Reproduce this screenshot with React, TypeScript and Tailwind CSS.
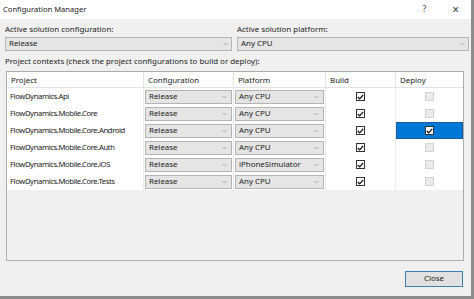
import React from "react"

const projects = [
  { name: "FlowDynamics.Api", config: "Release", platform: "Any CPU", build: true, deploy: false, selected: false },
  { name: "FlowDynamics.Mobile.Core", config: "Release", platform: "Any CPU", build: true, deploy: false, selected: false },
  { name: "FlowDynamics.Mobile.Core.Android", config: "Release", platform: "Any CPU", build: true, deploy: true, selected: true },
  { name: "FlowDynamics.Mobile.Core.Auth", config: "Release", platform: "Any CPU", build: true, deploy: false, selected: false },
  { name: "FlowDynamics.Mobile.Core.iOS", config: "Release", platform: "iPhoneSimulator", build: true, deploy: false, selected: false },
  { name: "FlowDynamics.Mobile.Core.Tests", config: "Release", platform: "Any CPU", build: true, deploy: false, selected: false },
]

function Chevron({ className = "" }: { className?: string }) {
  return (
    <svg width="5" height="4" viewBox="0 0 5 4" className={className}>
      <path d="M0.5 1 L2.5 3 L4.5 1" fill="none" stroke="currentColor" strokeWidth="0.8" />
    </svg>
  )
}

function Check() {
  return (
    <svg width="7" height="6" viewBox="0 0 7 6">
      <path d="M0.8 3 L2.7 4.9 L6.2 0.8" fill="none" stroke="#111" strokeWidth="1.3" />
    </svg>
  )
}

function Checkbox({ checked, disabled }: { checked: boolean; disabled?: boolean }) {
  if (disabled) {
    return <div className="w-[9px] h-[9px] border border-[#d3d3d3] bg-[#ebebeb]" />
  }
  return (
    <div className="w-[9px] h-[9px] border border-[#333] bg-white flex items-center justify-center">
      {checked && <Check />}
    </div>
  )
}

function Combo({ value, className = "" }: { value: string; className?: string }) {
  return (
    <div className={`flex items-center justify-between border border-[#b4b4b4] bg-[#e5e5e5] pl-[3px] ${className}`}>
      <span>{value}</span>
      <Chevron className="text-[#9a9a9a]" />
    </div>
  )
}

export default function App() {
  return (
    <div
      className="w-[474px] h-[299px] bg-[#f0f0f0] border-r-[3px] border-b-[3px] border-[#8c8c8c] flex flex-col text-[7.9px] text-[#1b1b1b] overflow-hidden"
      style={{ fontFamily: '"Noto Sans", "Open Sans", sans-serif' }}
    >
      {/* title bar */}
      <div className="h-[19px] bg-white flex items-center pl-[3px] pr-[12px] shrink-0">
        <span className="text-[7.6px] text-[#222]">Configuration Manager</span>
        <span className="ml-auto text-[8.5px] text-[#444] mr-[26px]">?</span>
        <span className="text-[12px] leading-none text-[#444]">×</span>
      </div>

      <div className="flex flex-col pl-[5px] pr-[2px] pt-[4px]">
        {/* solution selectors */}
        <div className="flex gap-[5px]">
          <div className="w-[227px] flex flex-col">
            <span className="h-[13px] leading-[13px]">Active solution configuration:</span>
            <Combo value="Release" className="h-[14px] mt-[1px] pr-[3px]" />
          </div>
          <div className="w-[232px] flex flex-col">
            <span className="h-[13px] leading-[13px]">Active solution platform:</span>
            <Combo value="Any CPU" className="h-[14px] mt-[1px] pr-[3px]" />
          </div>
        </div>

        <span className="mt-[4px] h-[13px] leading-[13px]">Project contexts (check the project configurations to build or deploy):</span>

        {/* grid */}
        <div className="mt-[3px] ml-[1px] w-[458px] h-[190px] border border-[#adadad] bg-[#f0f0f0] flex flex-col">
          <div className="flex h-[16px] bg-white border-b border-[#e3e3e3] shrink-0">
            <div className="w-[137px] pl-[4px] pt-[3px] flex items-center border-r border-[#e3e3e3]">Project</div>
            <div className="w-[90px] pl-[4px] pt-[3px] flex items-center border-r border-[#e3e3e3]">Configuration</div>
            <div className="w-[92px] pl-[4px] pt-[3px] flex items-center border-r border-[#e3e3e3]">Platform</div>
            <div className="w-[70px] pl-[4px] pt-[3px] flex items-center border-r border-[#e3e3e3]">Build</div>
            <div className="flex-1 pl-[4px] pt-[3px] flex items-center">Deploy</div>
          </div>
          {projects.map((p) => (
            <div key={p.name} className="flex h-[17px] bg-white shrink-0">
              <div className="w-[137px] pl-[3px] flex items-center border-r border-[#ececec] whitespace-nowrap overflow-hidden text-[7.7px] tracking-[-0.4px]">
                {p.name}
              </div>
              <div className="w-[90px] px-[1px] flex items-center border-r border-[#ececec]">
                <Combo value={p.config} className="w-full h-[14px] pr-[4px]" />
              </div>
              <div className="w-[92px] px-[1px] flex items-center border-r border-[#ececec]">
                <Combo value={p.platform} className="w-full h-[14px] pr-[4px]" />
              </div>
              <div className="w-[70px] flex items-center justify-center border-r border-[#ececec]">
                <Checkbox checked={p.build} />
              </div>
              <div
                className={`flex-1 flex items-center justify-center ${
                  p.selected ? "bg-[#0078d7] border border-[#1a5a9e]" : ""
                }`}
              >
                <Checkbox checked={p.deploy} disabled={!p.selected} />
              </div>
            </div>
          ))}
        </div>

        <div className="flex justify-end mt-[10px] pr-[6px]">
          <button className="w-[58px] h-[16px] border border-[#3c7fb1] bg-[#e1e1e1] text-[7.9px] text-[#1b1b1b] flex items-center justify-center">
            Close
          </button>
        </div>
      </div>
    </div>
  )
}
